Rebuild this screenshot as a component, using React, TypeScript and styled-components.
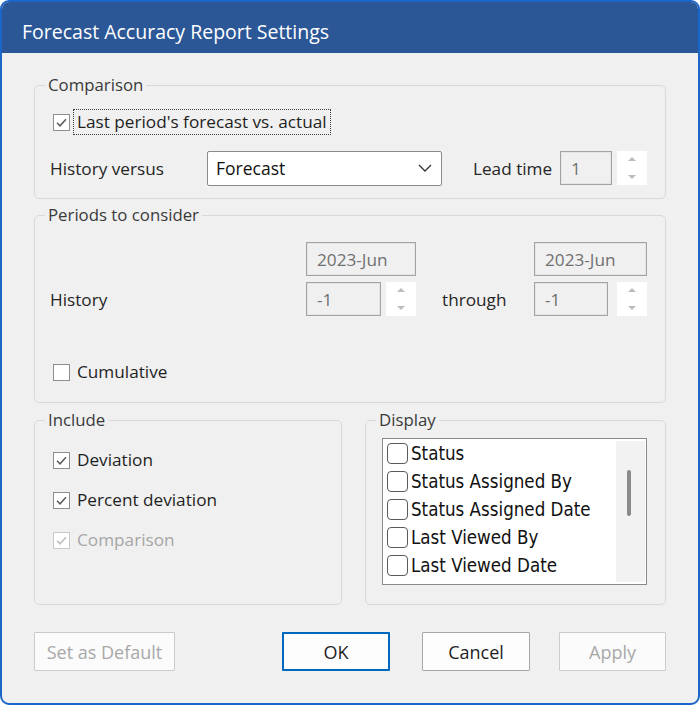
import styled, { createGlobalStyle } from "styled-components";

const GlobalStyle = createGlobalStyle`
  html, body {
    margin: 0;
    padding: 0;
    background: #ffffff;
  }
  body {
    font-family: "Open Sans", "Noto Sans", sans-serif;
    -webkit-font-smoothing: antialiased;
  }
`;

const Window = styled.div`
  width: 700px;
  height: 705px;
  box-sizing: border-box;
  border: 2px solid #1b66c9;
  border-radius: 9px;
  overflow: hidden;
  background: #f0f0f0;
  display: flex;
  flex-direction: column;
`;

const TitleBar = styled.div`
  height: 51px;
  flex-shrink: 0;
  box-sizing: border-box;
  padding: 17px 0 0 20px;
  background: #2b5797;
  color: #ffffff;
  font-size: 19.5px;
  line-height: 26px;
`;

const Body = styled.div`
  padding: 22px 32px 0;
  display: flex;
  flex-direction: column;
  font-size: 17.2px;
  color: #222222;
`;

const Group = styled.fieldset<{ $mt?: number }>`
  margin: ${(p) => p.$mt ?? 0}px 0 0;
  padding: 0;
  min-width: 0;
  border: 1px solid #d9d9d9;
  border-radius: 5px;
`;

const Legend = styled.legend`
  margin-left: 10px;
  padding: 0 3px;
  font-size: 16.8px;
  line-height: 20px;
  color: #3a3a3a;
`;

const GroupBody = styled.div<{ $pt: number; $pb: number; $pl?: number }>`
  padding: ${(p) => p.$pt}px 18px ${(p) => p.$pb}px ${(p) => p.$pl ?? 15}px;
  display: flex;
  flex-direction: column;
`;

const CheckRow = styled.label<{ $disabled?: boolean; $mt?: number }>`
  display: flex;
  align-items: center;
  height: 26px;
  margin-top: ${(p) => p.$mt ?? 0}px;
  color: ${(p) => (p.$disabled ? "#a6a6a6" : "#1f1f1f")};
`;

const Box = styled.span<{ $disabled?: boolean }>`
  width: 17px;
  height: 17px;
  box-sizing: border-box;
  margin-left: 3px;
  border: 1px solid ${(p) => (p.$disabled ? "#c9c9c9" : "#8e8e8e")};
  background: #ffffff;
  display: flex;
  align-items: center;
  justify-content: center;
  flex-shrink: 0;
`;

const CheckText = styled.span<{ $focused?: boolean }>`
  margin-left: 3px;
  padding: 0 3px;
  line-height: 24px;
  border: 1px dotted ${(p) => (p.$focused ? "#3c3c3c" : "transparent")};
  white-space: nowrap;
`;

const Row = styled.div<{ $mt?: number; $h: number }>`
  display: flex;
  align-items: center;
  height: ${(p) => p.$h}px;
  margin-top: ${(p) => p.$mt ?? 0}px;
`;

const FieldLabel = styled.span<{ $w?: number; $ml?: number }>`
  width: ${(p) => (p.$w ? `${p.$w}px` : "auto")};
  margin-left: ${(p) => p.$ml ?? 0}px;
  color: #262626;
  white-space: nowrap;
  flex-shrink: 0;
`;

const Combo = styled.div`
  width: 235px;
  height: 35px;
  box-sizing: border-box;
  border: 1px solid #8a8a8a;
  border-radius: 2px;
  background: #ffffff;
  display: flex;
  align-items: center;
  justify-content: space-between;
  padding: 0 9px 0 8px;
  color: #111111;
  font-size: 17.5px;
`;

const ReadBox = styled.div<{ $w: number; $ml?: number }>`
  width: ${(p) => p.$w}px;
  height: 34px;
  margin-left: ${(p) => p.$ml ?? 0}px;
  box-sizing: border-box;
  border: 1px solid #a3a3a3;
  box-shadow: inset 0 0 0 1px #e4e4e4;
  background: #f0f0f0;
  color: #707070;
  padding-left: 10px;
  display: flex;
  align-items: center;
  flex-shrink: 0;
`;

const Spinner = styled.div<{ $ml: number }>`
  width: 30px;
  height: 34px;
  margin-left: ${(p) => p.$ml}px;
  box-sizing: border-box;
  padding: 6px 0;
  background: #ffffff;
  display: flex;
  flex-direction: column;
  justify-content: space-between;
  align-items: center;
  flex-shrink: 0;
`;

const Arrow = styled.span<{ $down?: boolean }>`
  width: 0;
  height: 0;
  border-left: 4px solid transparent;
  border-right: 4px solid transparent;
  ${(p) =>
    p.$down
      ? "border-top: 4px solid #bcbcbc;"
      : "border-bottom: 4px solid #bcbcbc;"}
`;

const PeriodGrid = styled.div`
  display: grid;
  grid-template-columns: 256px 110px 118px 113px;
  grid-template-rows: 34px 34px;
  row-gap: 6px;
  align-items: center;
`;

const SpinPair = styled.div`
  display: flex;
  align-items: center;
`;

const BottomGroups = styled.div`
  display: grid;
  grid-template-columns: 308px 301px;
  column-gap: 23px;
  margin-top: 7px;
`;

const ListBox = styled.div`
  width: 265px;
  height: 147px;
  box-sizing: border-box;
  border: 1px solid #86898e;
  background: #ffffff;
  display: flex;
  overflow: hidden;
`;

const ListItems = styled.div`
  flex: 1;
  display: flex;
  flex-direction: column;
`;

const ListItem = styled.div`
  height: 28px;
  flex-shrink: 0;
  display: flex;
  align-items: center;
  padding-left: 4px;
  font-family: "DejaVu Sans Condensed", "DejaVu Sans", sans-serif;
  font-size: 18.6px;
  color: #111111;
  white-space: nowrap;
`;

const ListBoxCheck = styled.span`
  width: 21px;
  height: 21px;
  box-sizing: border-box;
  border: 1.5px solid #5a5a5a;
  border-radius: 4px;
  margin-right: 3px;
  flex-shrink: 0;
`;

const ScrollTrack = styled.div`
  width: 29px;
  margin: 2px 1px 2px 0;
  background: #f2f2f2;
  position: relative;
`;

const ScrollThumb = styled.div`
  position: absolute;
  left: 11px;
  top: 29px;
  width: 4px;
  height: 46px;
  border-radius: 2px;
  background: #8a8a8a;
`;

const ButtonRow = styled.div`
  display: flex;
  margin-top: 27px;
`;

const ButtonGroup = styled.div`
  display: flex;
  margin-left: auto;
`;

const Button = styled.button<{ $w: number; $ml?: number; $primary?: boolean }>`
  width: ${(p) => p.$w}px;
  height: 39px;
  box-sizing: border-box;
  margin: 0 0 0 ${(p) => p.$ml ?? 0}px;
  padding: 0;
  font-family: inherit;
  font-size: 18px;
  background: #fdfdfd;
  color: #1f1f1f;
  border: ${(p) => (p.$primary ? "2px solid #0067c0" : "1px solid #a8a8a8")};
  border-radius: 1px;
  &:disabled {
    color: #a8a8a8;
    border-color: #cbcbcb;
    background: #fbfbfb;
  }
`;

function CheckMark({ color }: { color: string }) {
  return (
    <svg width="13" height="13" viewBox="0 0 13 13">
      <polyline
        points="2,6.8 5,9.8 11,3.2"
        fill="none"
        stroke={color}
        strokeWidth="1.5"
      />
    </svg>
  );
}

function Check({
  label,
  checked,
  disabled,
  focused,
  mt,
}: {
  label: string;
  checked?: boolean;
  disabled?: boolean;
  focused?: boolean;
  mt?: number;
}) {
  return (
    <CheckRow $disabled={disabled} $mt={mt}>
      <Box $disabled={disabled}>
        {checked && <CheckMark color={disabled ? "#bdbdbd" : "#5c5c5c"} />}
      </Box>
      <CheckText $focused={focused}>{label}</CheckText>
    </CheckRow>
  );
}

function SpinButtons({ ml }: { ml: number }) {
  return (
    <Spinner $ml={ml}>
      <Arrow />
      <Arrow $down />
    </Spinner>
  );
}

const displayFields = [
  "Status",
  "Status Assigned By",
  "Status Assigned Date",
  "Last Viewed By",
  "Last Viewed Date",
];

export default function App() {
  return (
    <>
      <GlobalStyle />
      <Window>
        <TitleBar>Forecast Accuracy Report Settings</TitleBar>
        <Body>
          <Group>
            <Legend>Comparison</Legend>
            <GroupBody $pt={14} $pb={12}>
              <Check label="Last period's forecast vs. actual" checked focused />
              <Row $mt={15} $h={36}>
                <FieldLabel $w={157}>History versus</FieldLabel>
                <Combo>
                  <span>Forecast</span>
                  <svg width="14" height="8" viewBox="0 0 14 8">
                    <polyline
                      points="1,1 7,7 13,1"
                      fill="none"
                      stroke="#333"
                      strokeWidth="1.3"
                    />
                  </svg>
                </Combo>
                <FieldLabel $w={79} $ml={31}>Lead time</FieldLabel>
                <ReadBox $w={52} $ml={8}>1</ReadBox>
                <SpinButtons ml={5} />
              </Row>
            </GroupBody>
          </Group>

          <Group $mt={6}>
            <Legend>Periods to consider</Legend>
            <GroupBody $pt={17} $pb={17}>
              <PeriodGrid>
                <span />
                <ReadBox $w={110}>2023-Jun</ReadBox>
                <span />
                <ReadBox $w={113}>2023-Jun</ReadBox>
                <FieldLabel>History</FieldLabel>
                <SpinPair>
                  <ReadBox $w={75}>-1</ReadBox>
                  <SpinButtons ml={5} />
                </SpinPair>
                <FieldLabel $ml={26}>through</FieldLabel>
                <SpinPair>
                  <ReadBox $w={74}>-1</ReadBox>
                  <SpinButtons ml={9} />
                </SpinPair>
              </PeriodGrid>
              <Check label="Cumulative" mt={43} />
            </GroupBody>
          </Group>

          <BottomGroups>
            <Group>
              <Legend>Include</Legend>
              <GroupBody $pt={17} $pb={17}>
                <Check label="Deviation" checked />
                <Check label="Percent deviation" checked mt={14} />
                <Check label="Comparison" checked disabled mt={14} />
              </GroupBody>
            </Group>
            <Group>
              <Legend>Display</Legend>
              <GroupBody $pt={8} $pb={19} $pl={16}>
                <ListBox>
                  <ListItems>
                    {displayFields.map((f) => (
                      <ListItem key={f}>
                        <ListBoxCheck />
                        {f}
                      </ListItem>
                    ))}
                  </ListItems>
                  <ScrollTrack>
                    <ScrollThumb />
                  </ScrollTrack>
                </ListBox>
              </GroupBody>
            </Group>
          </BottomGroups>

          <ButtonRow>
            <Button $w={141} disabled>
              Set as Default
            </Button>
            <ButtonGroup>
              <Button $w={108} $primary>
                OK
              </Button>
              <Button $w={108} $ml={32}>
                Cancel
              </Button>
              <Button $w={107} $ml={29} disabled>
                Apply
              </Button>
            </ButtonGroup>
          </ButtonRow>
        </Body>
      </Window>
    </>
  );
}
